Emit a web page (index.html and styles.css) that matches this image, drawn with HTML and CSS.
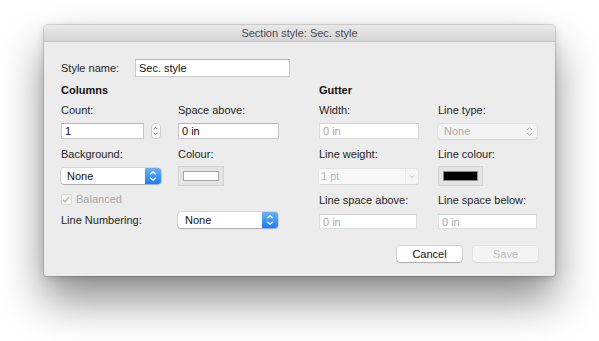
FILE: index.html
```html
<!DOCTYPE html>
<html>
<head>
<meta charset="utf-8">
<link rel="stylesheet" href="styles.css">
</head>
<body>
<div class="window">
  <div class="titlebar">Section style: Sec. style</div>
  <div class="content">
    <div class="name-row">
      <span class="label name-label">Style name:</span>
      <div class="field name-field">Sec. style</div>
    </div>
    <div class="grid">
      <div class="heading span2">Columns</div>
      <div class="heading span2">Gutter</div>

      <div class="label">Count:</div>
      <div class="label">Space above:</div>
      <div class="label">Width:</div>
      <div class="label">Line type:</div>

      <div class="count-cell">
        <div class="field count-field">1</div>
        <div class="stepper">
          <svg width="10" height="16" viewBox="0 0 10 16"><path d="M3 6 L5 4 L7 6" fill="none" stroke="#555" stroke-width="1"/><path d="M3 10 L5 12 L7 10" fill="none" stroke="#555" stroke-width="1"/></svg>
        </div>
      </div>
      <div class="field space-field">0 in</div>
      <div class="field disabled width-field">0 in</div>
      <div class="popup disabled linetype">
        <span>None</span>
        <svg class="chev" width="14" height="15" viewBox="0 0 14 15"><path d="M5 6 L7.5 3.8 L10 6" fill="none" stroke="#b0b0b0" stroke-width="1"/><path d="M5 9 L7.5 11.2 L10 9" fill="none" stroke="#b0b0b0" stroke-width="1"/></svg>
      </div>

      <div class="label">Background:</div>
      <div class="label">Colour:</div>
      <div class="label">Line weight:</div>
      <div class="label">Line colour:</div>

      <div class="popup bg-popup">
        <span>None</span>
        <div class="blue-arrows">
          <svg width="16" height="16" viewBox="0 0 16 16"><path d="M5.2 6.3 L8 3.8 L10.8 6.3" fill="none" stroke="#fff" stroke-width="1.3"/><path d="M5.2 9.7 L8 12.2 L10.8 9.7" fill="none" stroke="#fff" stroke-width="1.3"/></svg>
        </div>
      </div>
      <div class="well"><div class="swatch white"></div></div>
      <div class="combo disabled">
        <span class="combo-text">1 pt</span>
        <span class="combo-arrow"><svg width="12" height="15" viewBox="0 0 12 15"><path d="M4 6.5 L6 8.5 L8 6.5" fill="none" stroke="#b5b5b5" stroke-width="1"/></svg></span>
      </div>
      <div class="well well-dark"><div class="swatch black"></div></div>

      <div class="check-row span2">
        <span class="checkbox"><svg width="11" height="11" viewBox="0 0 11 11"><path d="M2.5 5.8 L4.6 8 L8.6 2.6" fill="none" stroke="#b3b3b3" stroke-width="1.3"/></svg></span>
        <span class="check-label">Balanced</span>
      </div>
      <div class="label low">Line space above:</div>
      <div class="label low">Line space below:</div>

      <div class="label">Line Numbering:</div>
      <div class="popup ln-popup">
        <span>None</span>
        <div class="blue-arrows">
          <svg width="16" height="16" viewBox="0 0 16 16"><path d="M5.2 6.3 L8 3.8 L10.8 6.3" fill="none" stroke="#fff" stroke-width="1.3"/><path d="M5.2 9.7 L8 12.2 L10.8 9.7" fill="none" stroke="#fff" stroke-width="1.3"/></svg>
        </div>
      </div>
      <div class="field disabled lsa-field">0 in</div>
      <div class="field disabled lsb-field">0 in</div>
    </div>
    <div class="buttons">
      <div class="button">Cancel</div>
      <div class="button button-disabled">Save</div>
    </div>
  </div>
</div>
</body>
</html>
```
FILE: styles.css
```css
html, body {
  margin: 0;
  padding: 0;
  background: #ffffff;
}
body {
  font-family: "Liberation Sans", Arial, sans-serif;
  font-size: 11px;
  color: #262626;
  width: 599px;
  height: 341px;
  overflow: hidden;
  padding-top: 25px;
  box-sizing: border-box;
}
.window {
  margin-left: 44px;
  width: 511px;
  height: 251px;
  background: #ececec;
  border-radius: 4px 4px 3px 3px;
  box-shadow: 0 24px 44px rgba(0,0,0,0.45), 0 2px 10px rgba(0,0,0,0.15), 0 0 0 1px rgba(0,0,0,0.12);
  overflow: hidden;
  box-sizing: border-box;
}
.titlebar {
  height: 16px;
  line-height: 16px;
  border-bottom: 1px solid #c4c4c4;
  background: linear-gradient(#e9e9e9, #d5d5d5);
  text-align: center;
  color: #4a4a4a;
  font-size: 11px;
}
.content {
  padding: 17px 17px 0 17px;
}
.name-row {
  display: flex;
  align-items: center;
  height: 18px;
}
.name-label {
  width: 74px;
  color: #1a1a1a;
}
.label {
  display: flex;
  align-items: center;
  line-height: 13px;
  color: #262626;
}
.label.low {
  align-self: end;
  padding-bottom: 5px;
}
.field {
  box-sizing: border-box;
  background: #fff;
  border: 1px solid #c9c9c9;
  border-top-color: #b5b5b5;
  padding: 0 3px;
  display: flex;
  align-items: center;
  color: #111;
  height: 16px;
}
.name-field {
  width: 155px;
  height: 18px;
}
.field.disabled {
  color: #a9a9a9;
  border-color: #dedede;
  border-top-color: #d2d2d2;
}
.grid {
  margin-top: 3px;
  display: grid;
  grid-template-columns: 117px 141px 119px 100px;
  grid-template-rows: 20px 20px 22px 24px 20px 26px 17px;
}
.grid > * {
  align-self: center;
}
.span2 {
  grid-column: span 2;
}
.heading {
  font-weight: bold;
  color: #111;
  line-height: 13px;
}
.count-cell {
  display: flex;
  align-items: center;
  gap: 7px;
}
.count-field {
  width: 83px;
}
.stepper {
  width: 10px;
  height: 16px;
  box-sizing: border-box;
  border: 1px solid #cfcfcf;
  border-radius: 4px;
  background: #fafafa;
  display: flex;
}
.stepper svg {
  margin-left: -1px;
  margin-top: -1px;
}
.space-field { width: 101px; }
.width-field { width: 100px; }
.lsa-field { width: 98px; height: 15px; align-self: end; }
.lsb-field { width: 99px; height: 15px; align-self: end; }
.popup {
  box-sizing: border-box;
  height: 16px;
  background: #fff;
  border-radius: 3px;
  box-shadow: 0 0 0 0.5px rgba(0,0,0,0.18), 0 1px 1px rgba(0,0,0,0.2);
  display: flex;
  align-items: center;
  justify-content: space-between;
  color: #111;
  overflow: hidden;
}
.popup span {
  padding-left: 6px;
}
.bg-popup { width: 100px; }
.ln-popup { width: 100px; align-self: start; }
.ln-popup span { padding-left: 7px; }
.blue-arrows {
  width: 16px;
  height: 16px;
  background: linear-gradient(#69b1fa, #1c7ff5);
  display: flex;
}
.popup.disabled {
  width: 99px;
  height: 15px;
  background: #f4f4f4;
  color: #aaaaaa;
  box-shadow: 0 0 0 0.5px rgba(0,0,0,0.08), 0 1px 1px rgba(0,0,0,0.08);
}
.chev {
  margin-right: 1px;
}
.well {
  box-sizing: border-box;
  width: 46px;
  height: 20px;
  background: #e4e4e4;
  border: 1px solid #d2d2d2;
  padding: 4px 4px 4px 4px;
  display: flex;
}
.well-dark { width: 45px; }
.swatch {
  flex: 1;
  box-sizing: border-box;
}
.swatch.white {
  background: #fff;
  border: 1px solid #a6a6a6;
}
.swatch.black {
  background: #000;
  border: 1px solid #8a8a8a;
}
.combo {
  box-sizing: border-box;
  width: 99px;
  height: 15px;
  display: flex;
  background: #f5f5f5;
  box-shadow: 0 0 0 0.5px rgba(0,0,0,0.07), 0 1px 1px rgba(0,0,0,0.06);
  border-radius: 2px;
}
.combo-text {
  flex: 1;
  display: flex;
  align-items: center;
  padding-left: 2px;
  color: #b8b8b8;
  background: #f8f8f8;
}
.combo-arrow {
  width: 12px;
  border-left: 1px solid #ececec;
  display: flex;
}
.check-row {
  display: flex;
  align-items: center;
  gap: 4px;
}
.checkbox {
  width: 11px;
  height: 11px;
  box-sizing: border-box;
  border: 1px solid #d6d6d6;
  border-radius: 2px;
  background: #f6f6f6;
  display: flex;
}
.checkbox svg {
  margin: -1px 0 0 -1px;
}
.check-label {
  color: #a8a8a8;
}
.buttons {
  margin-top: 17px;
  display: flex;
  justify-content: flex-end;
  gap: 11px;
}
.button {
  width: 65px;
  height: 16px;
  box-sizing: border-box;
  border-radius: 3px;
  background: #fff;
  box-shadow: 0 0 0 0.5px rgba(0,0,0,0.2), 0 1px 1px rgba(0,0,0,0.2);
  display: flex;
  align-items: center;
  justify-content: center;
  color: #111;
}
.button-disabled {
  background: #f4f4f4;
  color: #bdbdbd;
  box-shadow: 0 0 0 0.5px rgba(0,0,0,0.07), 0 1px 1px rgba(0,0,0,0.06);
}
```
